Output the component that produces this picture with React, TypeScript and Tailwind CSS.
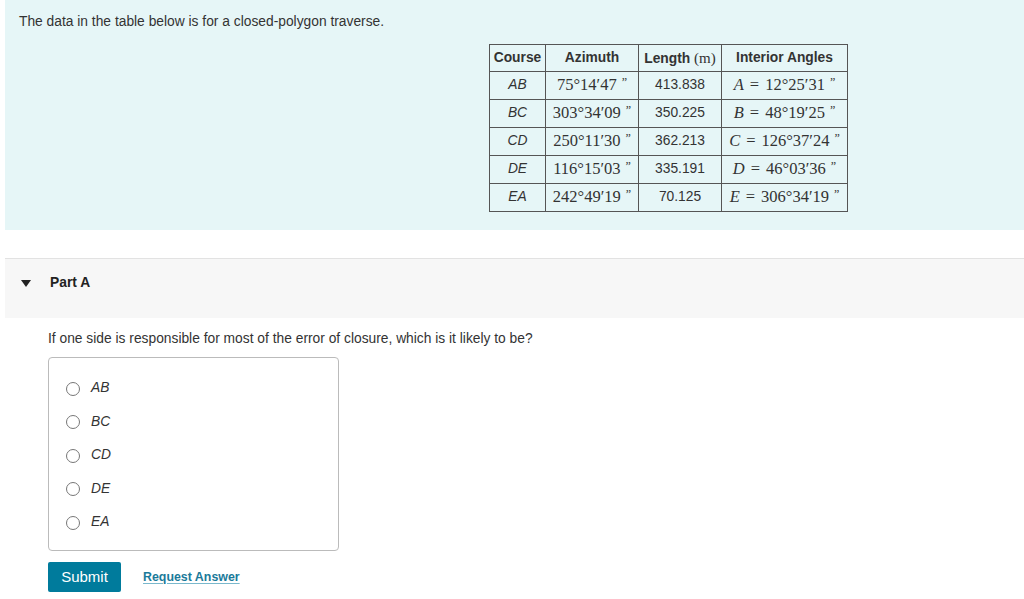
import React from "react";

const rows = [
  { course: "AB", az: "75°14′47", len: "413.838", v: "A", ang: "12°25′31" },
  { course: "BC", az: "303°34′09", len: "350.225", v: "B", ang: "48°19′25" },
  { course: "CD", az: "250°11′30", len: "362.213", v: "C", ang: "126°37′24" },
  { course: "DE", az: "116°15′03", len: "335.191", v: "D", ang: "46°03′36" },
  { course: "EA", az: "242°49′19", len: "70.125", v: "E", ang: "306°34′19" },
];

const serif = "font-['Liberation_Serif','DejaVu_Serif',serif]";

function Sec({ value }: { value: string }) {
  return (
    <span className={`${serif} text-[16.5px]`}>
      {value}
      <span className="ml-[5px] relative -top-[4px] text-[12px]">”</span>
    </span>
  );
}

function Radio({ label }: { label: string }) {
  return (
    <label className="flex h-[33.5px] items-center">
      <span className="ml-[17px] h-[14px] w-[14px] rounded-full border border-[#777] bg-white" />
      <span className="ml-[11px] text-[13.8px] italic text-[#333]">{label}</span>
    </label>
  );
}

export default function App() {
  return (
    <div className="min-h-[599px] bg-white pl-[5px] font-['Liberation_Sans',Arial,sans-serif] text-[#333]">
      <div className="h-[230px] bg-[#e6f6f7] px-[14px] pt-[13px]">
        <p className="text-[13.8px] leading-[18px]">
          The data in the table below is for a closed-polygon traverse.
        </p>
        <table className="ml-[470px] mt-[13px] border-collapse border border-[#555] text-[13.8px]">
          <thead>
            <tr className="h-[27px]">
              <th className="w-[56px] border border-[#555] px-0 font-bold">Course</th>
              <th className="w-[93px] border border-[#555] px-0 font-bold">Azimuth</th>
              <th className="w-[83px] border border-[#555] px-0 font-bold">
                Length <span className={`${serif} font-normal text-[15px]`}>(m)</span>
              </th>
              <th className="w-[126px] border border-[#555] px-0 font-bold">Interior Angles</th>
            </tr>
          </thead>
          <tbody>
            {rows.map((r) => (
              <tr key={r.course} className="h-[28px]">
                <td className="border border-[#555] text-center italic">{r.course}</td>
                <td className="border border-[#555] px-0 text-center whitespace-nowrap">
                  <Sec value={r.az} />
                </td>
                <td className="border border-[#555] text-center">{r.len}</td>
                <td className="border border-[#555] px-0 text-center whitespace-nowrap">
                  <span className={`${serif} text-[16.5px] italic`}>{r.v}</span>
                  <span className={`${serif} text-[16.5px] mx-[6px]`}>=</span>
                  <Sec value={r.ang} />
                </td>
              </tr>
            ))}
          </tbody>
        </table>
      </div>

      <div className="mt-[28px] flex h-[60px] items-center border-t border-[#e2e2e2] bg-[#f7f7f7] pb-[10px]">
        <svg className="ml-[16px]" width="10" height="7" viewBox="0 0 10 7">
          <path d="M0 0 H10 L5 7 Z" fill="#222" />
        </svg>
        <span className="ml-[19px] text-[13.8px] font-bold text-[#222]">Part A</span>
      </div>

      <div className="pl-[43px] pt-[12px]">
        <p className="text-[13.8px] leading-[18px]">
          If one side is responsible for most of the error of closure, which is it likely to be?
        </p>
        <div className="mt-[9px] h-[194px] w-[291px] rounded-[4px] border border-[#bbb] pt-[14px]">
          {rows.map((r) => (
            <Radio key={r.course} label={r.course} />
          ))}
        </div>
        <div className="mt-[11px] flex items-center">
          <button className="h-[30px] w-[73px] rounded-[2px] bg-[#007b9c] text-[15px] text-white">
            Submit
          </button>
          <a className="ml-[22px] text-[12.4px] font-bold text-[#1a7a9a] underline decoration-[#7ab8cc] underline-offset-2">
            Request Answer
          </a>
        </div>
      </div>
    </div>
  );
}
